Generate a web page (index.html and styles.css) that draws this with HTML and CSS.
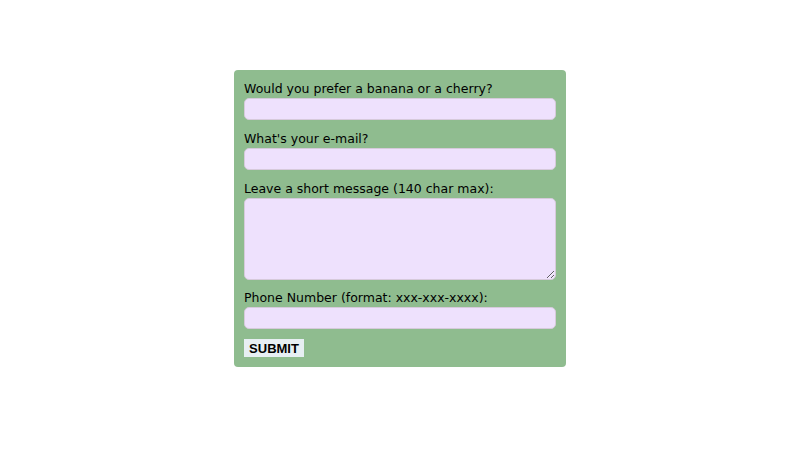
FILE: index.html
```html
<!DOCTYPE html>
<html>
<head>
<meta charset="utf-8">
<link rel="stylesheet" href="styles.css">
</head>
<body>
<form class="form">
  <label class="label" for="fruit">Would you prefer a banana or a cherry?</label>
  <input class="field" id="fruit" type="text">
  <label class="label" for="email">What's your e-mail?</label>
  <input class="field" id="email" type="email">
  <label class="label" for="msg">Leave a short message (140 char max):</label>
  <textarea class="field area" id="msg"></textarea>
  <label class="label" for="phone">Phone Number (format: xxx-xxx-xxxx):</label>
  <input class="field" id="phone" type="tel">
  <button class="submit" type="button">SUBMIT</button>
</form>
</body>
</html>
```
FILE: styles.css
```css
html, body {
  margin: 0;
  padding: 0;
  background: #ffffff;
}
body {
  padding-top: 70px;
  font-family: "DejaVu Sans", sans-serif;
}
.form {
  box-sizing: border-box;
  width: 332px;
  margin: 0 auto;
  padding: 10px;
  background: #8fbc8f;
  border-radius: 4px;
  display: flex;
  flex-direction: column;
  align-items: flex-start;
}
.label {
  display: block;
  font-family: "DejaVu Sans", sans-serif;
  font-size: 12.5px;
  line-height: 17px;
  color: #000;
  margin-bottom: 1px;
}
.field {
  box-sizing: border-box;
  display: block;
  width: 312px;
  height: 22px;
  margin: 0 0 10px 0;
  padding: 2px 4px;
  background: #eee1fd;
  border: 1px solid #d6cadb;
  border-radius: 5px;
  font-family: "DejaVu Sans", sans-serif;
  font-size: 13px;
}
.area {
  height: 82px;
  margin-bottom: 9px;
  resize: vertical;
}
.submit {
  box-sizing: border-box;
  height: 18px;
  width: 60px;
  padding: 0;
  margin: 0;
  border: none;
  background: #e7eff3;
  font-family: "Liberation Sans", Arial, sans-serif;
  font-weight: bold;
  font-size: 13px;
  color: #000;
}
```
